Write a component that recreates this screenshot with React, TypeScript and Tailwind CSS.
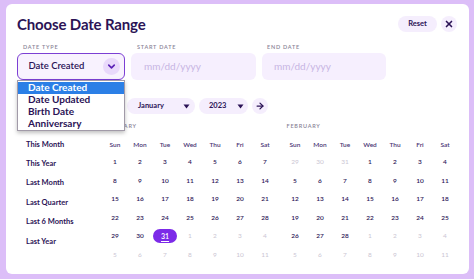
import { ArrowLeft, ArrowRight, ChevronDown, X } from 'lucide-react';

const font = { fontFamily: 'Lato, "Open Sans", sans-serif' };

const presets = ['This Month', 'This Year', 'Last Month', 'Last Quarter', 'Last 6 Months', 'Last Year'];
const weekdays = ['Sun', 'Mon', 'Tue', 'Wed', 'Thu', 'Fri', 'Sat'];
const options = ['Date Created', 'Date Updated', 'Birth Date', 'Anniversary'];

type Day = { n: number; muted?: boolean; selected?: boolean };

function range(from: number, to: number, muted = false): Day[] {
  const out: Day[] = [];
  for (let i = from; i <= to; i++) out.push({ n: i, muted });
  return out;
}

const january: Day[] = [
  ...range(1, 30),
  { n: 31, selected: true },
  ...range(1, 4, true),
  ...range(5, 11, true),
];

const february: Day[] = [
  ...range(29, 31, true),
  ...range(1, 28),
  ...range(1, 4, true),
  ...range(5, 11, true),
];

function Caret() {
  return (
    <svg width="7" height="5" viewBox="0 0 7 5" className="shrink-0">
      <path d="M0.5 0.5h6L3.5 4.5z" fill="#2b1356" />
    </svg>
  );
}

function Month({ label, days }: { label: string; days: Day[] }) {
  return (
    <div className="w-[175px] flex flex-col">
      <div className="h-[8px] flex items-center pl-[4px] text-[5.5px] tracking-[0.14em] text-[#8b8497] font-semibold">
        {label}
      </div>
      <div className="mt-[6px] grid grid-cols-7 w-[175px]">
        {weekdays.map((w) => (
          <div key={w} className="h-[17px] flex items-center justify-center text-[6.5px] font-semibold text-[#4a3574]">
            {w}
          </div>
        ))}
        {days.map((d, i) => (
          <div key={i} className="h-[18.5px] flex items-center justify-center">
            {d.selected ? (
              <span className="w-[24px] h-[14px] rounded-full bg-[#7c2ae8] text-white text-[7px] font-semibold flex items-center justify-center underline underline-offset-[1.5px]">
                {d.n}
              </span>
            ) : (
              <span className={d.muted ? 'text-[6.5px] text-[#cbc6d3]' : 'text-[6.5px] font-semibold text-[#2b1356]'}>{d.n}</span>
            )}
          </div>
        ))}
      </div>
    </div>
  );
}

export default function App() {
  return (
    <div className="w-[474px] h-[279px] bg-[#dcbef8] overflow-hidden pt-[4px] pl-[6px]" style={font}>
      <div className="relative w-[463px] h-[270px] bg-white rounded-[6px] px-[11px] pt-[12px]">
        <div className="h-[16px] flex items-center justify-between">
          <h1 className="text-[15px] font-bold text-[#2b1356] leading-none tracking-[-0.01em]">Choose Date Range</h1>
          <div className="flex items-center gap-[4px] mr-[1px]">
            <button className="h-[16px] w-[39px] rounded-full bg-[#f5eefd] text-[7.5px] font-bold text-[#2b1356] flex items-center justify-center">
              Reset
            </button>
            <button className="w-[16px] h-[16px] rounded-full bg-[#f5eefd] flex items-center justify-center">
              <X size={10} strokeWidth={4} color="#2b1356" />
            </button>
          </div>
        </div>

        <div className="mt-[11px] h-[8px] flex items-center text-[5.5px] tracking-[0.14em] text-[#8b8497] font-semibold">
          <span className="w-[114px] pl-[6px]">DATE TYPE</span>
          <span className="w-[131px] pl-[6px]">START DATE</span>
          <span className="pl-[5px]">END DATE</span>
        </div>

        <div className="mt-[2px] h-[27px] flex gap-[6px]">
          <div className="w-[108px] h-full rounded-[6px] border-[1.5px] border-[#7c3fd4] bg-[#f8f2fe] flex items-center justify-between pl-[10.5px] pr-[4px]">
            <span className="text-[9.5px] font-semibold text-[#2b1356]">Date Created</span>
            <span className="w-[17px] h-[17px] rounded-full bg-[#e9d9fb] flex items-center justify-center">
              <ChevronDown size={11} strokeWidth={3.5} color="#5b21b6" />
            </span>
          </div>
          <div className="w-[125px] h-full rounded-[6px] bg-[#f6effe] flex items-center pl-[13px] text-[10px] text-[#c7b5e3]">
            mm/dd/yyyy
          </div>
          <div className="w-[124px] h-full rounded-[6px] bg-[#f6effe] flex items-center pl-[12px] text-[10px] text-[#c7b5e3]">
            mm/dd/yyyy
          </div>
        </div>

        <div className="mt-[18px] h-[16px] ml-[90px] flex items-center gap-[4px]">
          <button className="w-[16px] h-[16px] rounded-full bg-[#f5eefd] flex items-center justify-center">
            <ArrowLeft size={10} strokeWidth={3} color="#2b1356" />
          </button>
          <div className="w-[68px] h-[16px] rounded-full bg-[#f5eefd] flex items-center justify-between pl-[11px] pr-[5px] text-[7.5px] font-bold text-[#2b1356]">
            January
            <Caret />
          </div>
          <div className="w-[49px] h-[16px] rounded-full bg-[#f5eefd] flex items-center justify-between pl-[10px] pr-[4px] text-[7.5px] font-bold text-[#2b1356]">
            2023
            <Caret />
          </div>
          <button className="w-[16px] h-[16px] rounded-full bg-[#f5eefd] flex items-center justify-center">
            <ArrowRight size={10} strokeWidth={3} color="#2b1356" />
          </button>
        </div>

        <div className="mt-[8px] flex">
          <div className="w-[85.5px] pt-[12.5px] flex flex-col">
            {presets.map((p) => (
              <div key={p} className="h-[19.4px] flex items-center pl-[9px] text-[7.5px] font-bold text-[#2b1356]">
                {p}
              </div>
            ))}
          </div>
          <Month label="JANUARY" days={january} />
          <div className="w-[5px]" />
          <Month label="FEBRUARY" days={february} />
        </div>

        <div className="absolute left-[11px] top-[76px] w-[108px] bg-white border border-[#a19aa8] shadow-[0_2px_4px_rgba(0,0,0,0.25)] flex flex-col pt-[0.5px]">
          {options.map((o, i) => (
            <div
              key={o}
              className={
                i === 0
                  ? 'h-[12px] flex items-center pl-[10px] bg-[#2b7fe6] text-white text-[10px] font-bold'
                  : 'h-[12px] flex items-center pl-[10px] text-[#2b1356] text-[10px] font-bold'
              }
            >
              {o}
            </div>
          ))}
        </div>
      </div>
    </div>
  );
}
